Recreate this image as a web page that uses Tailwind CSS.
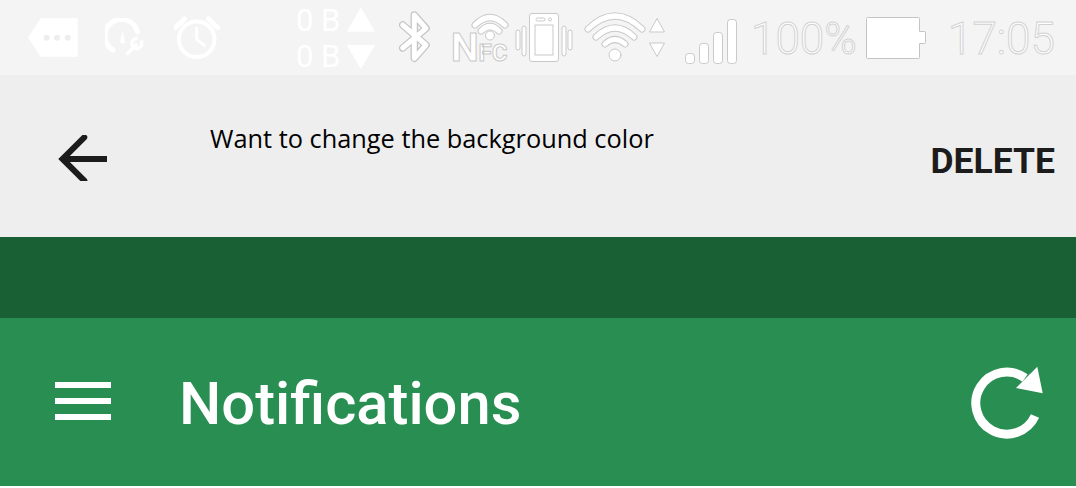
<!DOCTYPE html>
<html lang="en">
<head>
    <meta charset="UTF-8">
    <title>Notifications</title>
    <script src="https://cdn.jsdelivr.net/npm/@tailwindcss/browser@4"></script>
</head>
<body class="bg-white w-[1076px] h-[488px] overflow-hidden font-['Roboto',sans-serif]">

    <!-- Status bar -->
    <div class="h-[75px] bg-[#f4f4f4] flex items-start">
        <svg class="ml-[27px] mt-[18px]" width="51" height="39" viewBox="27 18 51 39">
            <path d="M28 37.5 L40.6 18.3 H76.5 Q77.8 18.3 77.8 19.6 V55.4 Q77.8 56.7 76.5 56.7 H40.6 Z" fill="#fff"/>
            <circle cx="46.7" cy="37.7" r="3" fill="#eee"/><circle cx="57" cy="37.7" r="3" fill="#eee"/><circle cx="67.7" cy="37.7" r="3" fill="#eee"/>
        </svg>
        <svg class="ml-[27px] mt-[18px]" width="42" height="39" viewBox="105 18 42 39" fill="none" stroke="#fff">
            <path d="M113 50 A16.5 16.5 0 1 1 137.5 32" stroke-width="5" stroke-linecap="round"/>
            <path d="M122.5 31 L125 42 A2.8 2.8 0 0 1 120 42 Z" fill="#fff" stroke="none"/>
            <path d="M127.5 53.5 L136 45" stroke-width="3.6" stroke-linecap="round"/>
            <path d="M139 39 A5 5 0 1 0 141.5 42" stroke-width="3.6" transform="rotate(-20 137 43)"/>
        </svg>
        <svg class="ml-[27px] mt-[16px]" width="46" height="44" viewBox="174 16 46 44" fill="none" stroke="#fff">
            <circle cx="196.7" cy="39.3" r="17.8" stroke-width="4"/>
            <path d="M196.7 27 V39.3 L205 46" stroke-width="3"/>
            <path d="M175.5 27.5 L184.5 19 M208.5 19 L217.5 27.5" stroke-width="5" stroke-linecap="round"/>
        </svg>
        <div class="ml-[76px] mt-[6px] w-[44px] flex flex-col gap-[6px] text-[31px] leading-[30px] text-white whitespace-nowrap">
            <span>0 B</span>
            <span>0 B</span>
        </div>
        <svg class="ml-[6px] mt-[7px]" width="30" height="63" viewBox="346 7 30 63" fill="#fff">
            <path d="M346.7 31.7 L361 7.3 L375 31.7 Z"/>
            <path d="M346.7 45 H375 L361 69 Z"/>
        </svg>
        <svg class="ml-[23px] mt-[10px]" width="34" height="54" viewBox="398 10 34 54" fill="none" stroke-linejoin="round" stroke-linecap="round">
            <path d="M401.7 25 L425 45 L413.3 58.3 V15 L425 28.3 L401.7 48" stroke="#c4c4c4" stroke-width="7.5"/>
            <path d="M401.7 25 L425 45 L413.3 58.3 V15 L425 28.3 L401.7 48" stroke="#fff" stroke-width="5"/>
        </svg>
        <svg class="ml-[19px] mt-[10px] overflow-visible" width="58" height="54" viewBox="452 10 58 54" fill="none" stroke-linecap="round">
            <g stroke="#c9c9c9" stroke-width="7">
                <path d="M475 25 Q490 10 505 25"/><path d="M481 31 Q490 22 499 31"/>
            </g>
            <g stroke="#fff" stroke-width="5">
                <path d="M475 25 Q490 10 505 25"/><path d="M481 31 Q490 22 499 31"/>
            </g>
            <circle cx="490" cy="35.5" r="4.5" fill="#fff" stroke="#c9c9c9"/>
            <text x="451" y="61" font-family="Roboto" font-weight="700" fill="#fff" stroke="#c9c9c9" stroke-width="1"><tspan font-size="39">N</tspan><tspan font-size="24">FC</tspan></text>
        </svg>
        <svg class="ml-[5px] mt-[12px]" width="58" height="52" viewBox="515 12 58 52" fill="#fff" stroke="#c9c9c9">
            <rect x="516" y="30" width="4" height="20" rx="2"/>
            <rect x="522" y="26" width="4" height="30" rx="2"/>
            <rect x="562" y="26" width="4" height="30" rx="2"/>
            <rect x="568" y="30" width="4" height="20" rx="2"/>
            <rect x="529.5" y="13.5" width="29" height="48" rx="2.5"/>
            <rect x="535" y="25" width="18" height="30"/>
            <rect x="536" y="18" width="9" height="3" rx="1.5"/>
            <circle cx="550" cy="19.5" r="1.5"/>
        </svg>
        <svg class="ml-[11px] mt-[12px]" width="62" height="52" viewBox="584 12 62 52" fill="none" stroke-linecap="round">
            <g stroke="#c9c9c9" stroke-width="7">
                <path d="M588 29 Q615 3 642 29"/><path d="M596 37 Q615 19 634 37"/><path d="M605 44 Q615 35 625 44"/>
            </g>
            <g stroke="#fff" stroke-width="5">
                <path d="M588 29 Q615 3 642 29"/><path d="M596 37 Q615 19 634 37"/><path d="M605 44 Q615 35 625 44"/>
            </g>
            <circle cx="615" cy="55" r="6" fill="#fff" stroke="#c9c9c9"/>
        </svg>
        <svg class="ml-[2px] mt-[17px]" width="18" height="41" viewBox="648 17 18 41" fill="#fff" stroke="#c9c9c9" stroke-linejoin="round">
            <path d="M649.5 32 L657 18.5 L664.5 32 Z"/>
            <path d="M649.5 43 H664.5 L657 56.5 Z"/>
        </svg>
        <svg class="ml-[19px] mt-[18px]" width="54" height="47" viewBox="685 18 54 47" fill="#fff" stroke="#c9c9c9">
            <rect x="685.5" y="53.5" width="9" height="10" rx="3"/>
            <rect x="699.5" y="43.5" width="9" height="20" rx="3"/>
            <rect x="713.5" y="32.5" width="9" height="31" rx="3"/>
            <rect x="727.5" y="19.5" width="9" height="44" rx="3"/>
        </svg>
        <span class="ml-[12px] mt-[14px] w-[104px] text-[44px] leading-[50px] font-light text-white [-webkit-text-stroke:1px_#d2d2d2] whitespace-nowrap">100%</span>
        <svg class="ml-[11px] mt-[16px]" width="61" height="44" viewBox="866 16 61 44" fill="#fff" stroke="#c4c4c4">
            <path d="M867.5 17.5 H918.5 Q919.5 17.5 919.5 18.5 V31.5 H924.5 Q925.5 31.5 925.5 32.5 V42.5 Q925.5 43.5 924.5 43.5 H919.5 V57.5 Q919.5 58.5 918.5 58.5 H867.5 Q866.5 58.5 866.5 57.5 V18.5 Q866.5 17.5 867.5 17.5 Z"/>
        </svg>
        <span class="ml-[21px] mt-[14px] text-[44px] leading-[50px] font-light text-white [-webkit-text-stroke:1px_#d2d2d2] whitespace-nowrap">17:05</span>
    </div>

    <!-- Selection bar -->
    <div class="h-[162px] bg-[#eeeeee] flex items-start pl-[58px] pr-[21px]">
        <svg class="mt-[60px]" width="50" height="46" viewBox="58 135 50 46" fill="none" stroke="#1c1c1c" stroke-width="6">
            <path d="M107 159 H62"/>
            <path d="M84.3 137.3 L62.5 159 L84.3 180.7" stroke-linecap="round"/>
        </svg>
        <p class="ml-[102px] mt-[45px] text-[25.35px] leading-[36px] text-black font-['Open_Sans',sans-serif] whitespace-nowrap">Want to change the background color</p>
        <span class="ml-auto mt-[64px] text-[35.5px] leading-[44px] font-bold text-[#1c1c1c]">DELETE</span>
    </div>

    <!-- Dark strip -->
    <div class="h-[81px] bg-[#1a6035]"></div>

    <!-- Toolbar -->
    <div class="h-[168px] bg-[#288e52] flex items-center pl-[55px] pr-[32px]">
        <div class="w-[56px] flex flex-col gap-[10px] -mt-[2px]">
            <div class="h-[6px] bg-white"></div>
            <div class="h-[6px] bg-white"></div>
            <div class="h-[6px] bg-white"></div>
        </div>
        <h1 class="ml-[68px] text-[59.7px] leading-[70px] font-medium text-white mt-[4px]">Notifications</h1>
        <svg class="ml-auto" width="74" height="74" viewBox="970 365 74 74">
            <path d="M1035 416 A31 31 0 1 1 1025 378" fill="none" stroke="#fff" stroke-width="9"/>
            <path d="M1016 388 L1037.3 366.7 L1042.7 393.3 Z" fill="#fff"/>
        </svg>
    </div>

</body>
</html>
